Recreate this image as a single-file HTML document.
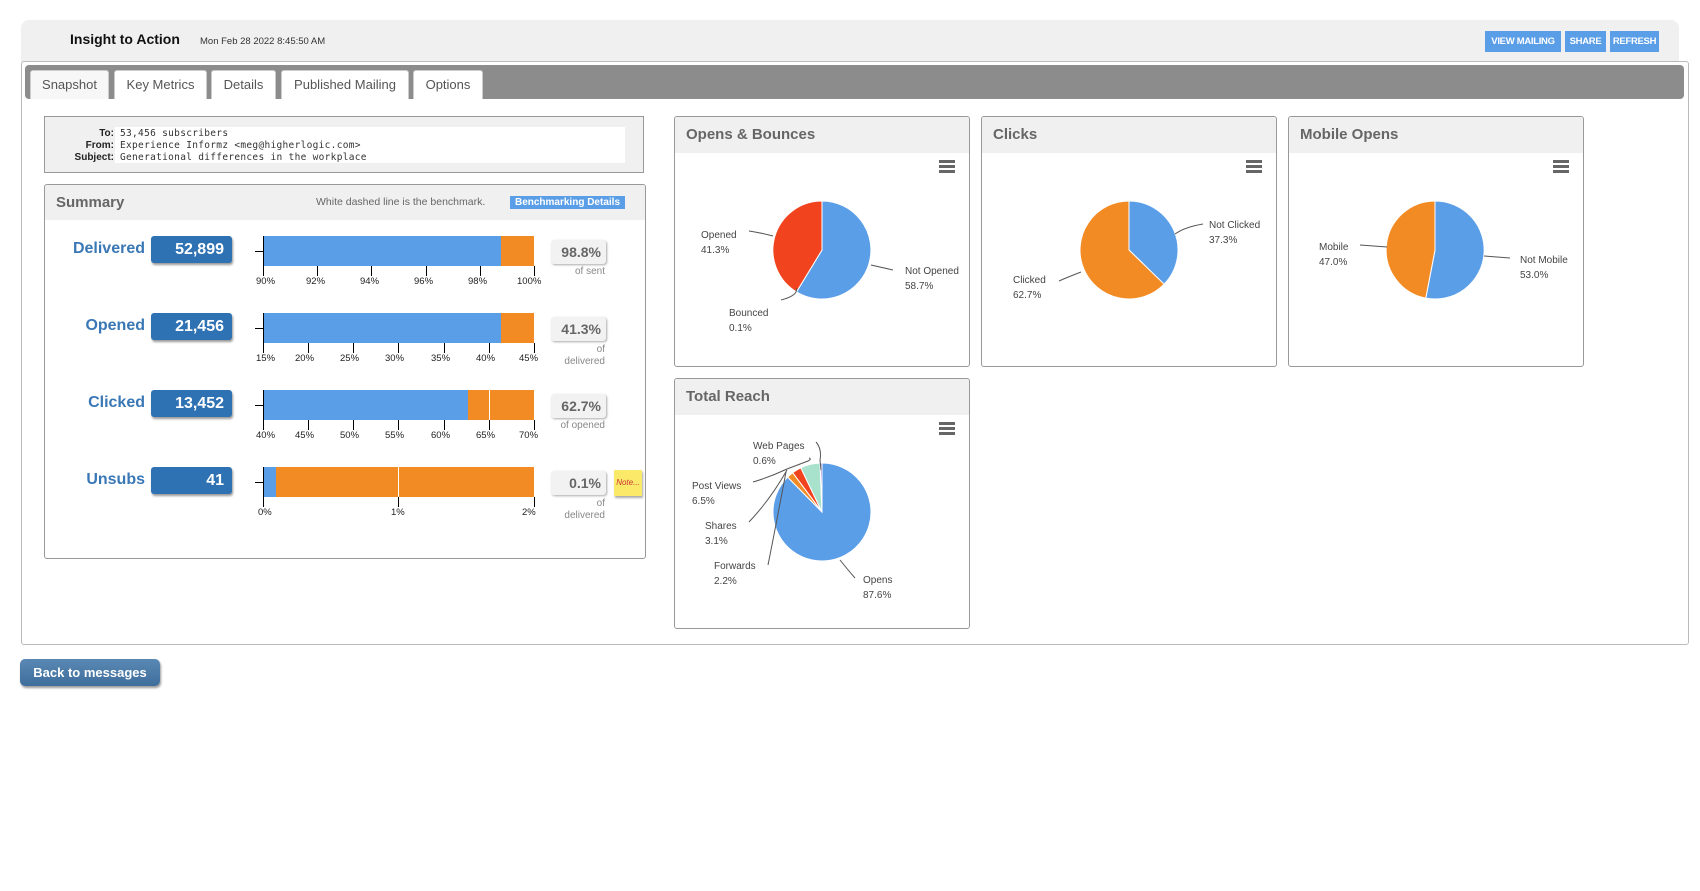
<!DOCTYPE html>
<html><head><meta charset="utf-8"><style>
*{box-sizing:border-box;margin:0;padding:0}
body{width:1700px;height:891px;background:#fff;font-family:"Liberation Sans",sans-serif;position:relative;overflow:hidden;color:#333}
.a{position:absolute}
.hdr{left:21px;top:20px;width:1658px;height:42px;background:#f0f0f0;border-radius:8px 8px 0 0}
.btn{top:31px;height:21px;background:#5b9ee8;color:#fff;font-size:9.5px;font-weight:bold;line-height:21px;text-align:center;letter-spacing:-0.3px}
.outer{left:21px;top:61px;width:1668px;height:584px;border:1px solid #bbb;border-radius:3px;background:#fff}
.strip{left:25px;top:65px;width:1659px;height:34px;background:#8c8c8c;border-radius:4px}
.tab{top:70px;height:29px;background:#fff;border:1px solid #ccc;border-bottom:none;border-radius:3px 3px 0 0;font-size:13px;color:#555;line-height:28px;text-align:center}
.box{border:1px solid #999;border-radius:3px;background:#fff}
.ph{background:#f0f0f0;border-radius:3px 3px 0 0;font-weight:bold;color:#666;font-size:15px;padding-left:11px;line-height:36px;height:36px}
.lbl{font-size:16px;font-weight:bold;color:#3a78b5;text-align:right;width:100px}
.badge{width:81px;height:27px;background:#2f72b3;border-radius:3px;color:#fff;font-weight:bold;font-size:16px;text-align:right;padding-right:8px;line-height:27px;box-shadow:1px 2px 2px #999}
.bar{height:30px;background:#5b9ee8}
.or{height:30px;background:#f28b24}
.tk{width:1px;height:10px;background:#000}
.tl{font-size:9.5px;color:#222;width:40px;margin-left:-10px}
.pct{width:55px;height:24px;background:#f2f2f2;border-radius:3px;box-shadow:1px 1px 2px #aaa;font-weight:bold;color:#666;font-size:14px;text-align:right;padding-right:5px;line-height:24px}
.sub{font-size:10px;color:#888;text-align:right;width:60px;line-height:12px}
.pl{font-size:10px;color:#444;line-height:15px}
.menu{width:16px;height:3px;background:#666;box-shadow:0 5px 0 #666,0 10px 0 #666}
</style></head><body>
<div class="a hdr"></div>
<div class="a" style="left:70px;top:31px;font-size:14px;font-weight:bold;color:#111">Insight to Action</div>
<div class="a" style="left:200px;top:36px;font-size:9.5px;color:#333">Mon Feb 28 2022 8:45:50 AM</div>
<div class="a btn" style="left:1485px;width:76px">VIEW MAILING</div>
<div class="a btn" style="left:1565px;width:41px">SHARE</div>
<div class="a btn" style="left:1610px;width:49px">REFRESH</div>
<div class="a outer"></div>
<div class="a strip"></div>
<div class="a tab" style="left:30px;width:79px;background:#f7f7f7">Snapshot</div>
<div class="a tab" style="left:114px;width:93px">Key Metrics</div>
<div class="a tab" style="left:211px;width:65px">Details</div>
<div class="a tab" style="left:281px;width:128px">Published Mailing</div>
<div class="a tab" style="left:413px;width:70px">Options</div>

<div class="a" style="left:44px;top:116px;width:600px;height:57px;border:1px solid #999;background:#f0f0f0"></div>
<div class="a" style="left:115px;top:127px;width:510px;height:36px;background:#fff"></div>
<div class="a" style="left:60px;top:128px;width:54px;text-align:right;font-size:10px;font-weight:bold;line-height:12px;color:#222">To:<br>From:<br>Subject:</div>
<div class="a" style="left:120px;top:128px;font-family:'DejaVu Sans Mono','Liberation Mono',monospace;font-size:9.5px;line-height:12px;color:#333;letter-spacing:0.3px">53,456 subscribers<br>Experience Informz &lt;meg@higherlogic.com&gt;<br>Generational differences in the workplace</div>

<div class="a box" style="left:44px;top:184px;width:602px;height:375px"><div class="ph" style="height:35px">Summary</div></div>
<div class="a" style="left:316px;top:196px;font-size:10.5px;color:#666">White dashed line is the benchmark.</div>
<div class="a" style="left:510px;top:196px;width:115px;height:13px;background:#5b9ee8;color:#fff;font-size:10px;font-weight:bold;line-height:13px;text-align:center">Benchmarking Details</div>

<!-- Delivered -->
<div class="a lbl" style="left:45px;top:240px">Delivered</div>
<div class="a badge" style="left:151px;top:236px">52,899</div>
<div class="a" style="left:255px;top:251px;width:8px;height:1px;background:#000"></div>
<div class="a bar" style="left:263px;top:236px;width:238px"></div>
<div class="a or" style="left:501px;top:236px;width:33px"></div>
<div class="a" style="left:263px;top:236px;width:1px;height:40px;background:#000"></div>
<div class="a tk" style="left:317px;top:266px"></div><div class="a tk" style="left:371px;top:266px"></div><div class="a tk" style="left:426px;top:266px"></div><div class="a tk" style="left:480px;top:266px"></div><div class="a tk" style="left:534px;top:266px"></div>
<div class="a tl" style="left:266px;top:276px">90%</div><div class="a tl" style="left:316px;top:276px">92%</div><div class="a tl" style="left:370px;top:276px">94%</div><div class="a tl" style="left:424px;top:276px">96%</div><div class="a tl" style="left:478px;top:276px">98%</div><div class="a tl" style="left:527px;top:276px">100%</div>
<div class="a pct" style="left:551px;top:240px">98.8%</div>
<div class="a sub" style="left:545px;top:266px">of sent</div>

<!-- Opened -->
<div class="a lbl" style="left:45px;top:317px">Opened</div>
<div class="a badge" style="left:151px;top:313px">21,456</div>
<div class="a" style="left:255px;top:328px;width:8px;height:1px;background:#000"></div>
<div class="a bar" style="left:263px;top:313px;width:238px"></div>
<div class="a or" style="left:501px;top:313px;width:33px"></div>
<div class="a" style="left:263px;top:313px;width:1px;height:40px;background:#000"></div>
<div class="a tk" style="left:308px;top:343px"></div><div class="a tk" style="left:353px;top:343px"></div><div class="a tk" style="left:398px;top:343px"></div><div class="a tk" style="left:444px;top:343px"></div><div class="a tk" style="left:489px;top:343px"></div><div class="a tk" style="left:534px;top:343px"></div>
<div class="a tl" style="left:266px;top:353px">15%</div><div class="a tl" style="left:305px;top:353px">20%</div><div class="a tl" style="left:350px;top:353px">25%</div><div class="a tl" style="left:395px;top:353px">30%</div><div class="a tl" style="left:441px;top:353px">35%</div><div class="a tl" style="left:486px;top:353px">40%</div><div class="a tl" style="left:529px;top:353px">45%</div>
<div class="a pct" style="left:551px;top:317px">41.3%</div>
<div class="a sub" style="left:545px;top:344px">of<br>delivered</div>

<!-- Clicked -->
<div class="a lbl" style="left:45px;top:394px">Clicked</div>
<div class="a badge" style="left:151px;top:390px">13,452</div>
<div class="a" style="left:255px;top:405px;width:8px;height:1px;background:#000"></div>
<div class="a bar" style="left:263px;top:390px;width:205px"></div>
<div class="a or" style="left:468px;top:390px;width:66px"></div>
<div class="a" style="left:489px;top:390px;width:1px;height:30px;background:#fff"></div>
<div class="a" style="left:263px;top:390px;width:1px;height:40px;background:#000"></div>
<div class="a tk" style="left:308px;top:420px"></div><div class="a tk" style="left:353px;top:420px"></div><div class="a tk" style="left:398px;top:420px"></div><div class="a tk" style="left:444px;top:420px"></div><div class="a tk" style="left:489px;top:420px"></div><div class="a tk" style="left:534px;top:420px"></div>
<div class="a tl" style="left:266px;top:430px">40%</div><div class="a tl" style="left:305px;top:430px">45%</div><div class="a tl" style="left:350px;top:430px">50%</div><div class="a tl" style="left:395px;top:430px">55%</div><div class="a tl" style="left:441px;top:430px">60%</div><div class="a tl" style="left:486px;top:430px">65%</div><div class="a tl" style="left:529px;top:430px">70%</div>
<div class="a pct" style="left:551px;top:394px">62.7%</div>
<div class="a sub" style="left:545px;top:420px">of opened</div>

<!-- Unsubs -->
<div class="a lbl" style="left:45px;top:471px">Unsubs</div>
<div class="a badge" style="left:151px;top:467px">41</div>
<div class="a" style="left:255px;top:482px;width:8px;height:1px;background:#000"></div>
<div class="a bar" style="left:264px;top:467px;width:12px"></div>
<div class="a or" style="left:276px;top:467px;width:258px"></div>
<div class="a" style="left:398px;top:467px;width:1px;height:30px;background:#fff"></div>
<div class="a" style="left:263px;top:467px;width:1px;height:40px;background:#000"></div>
<div class="a tk" style="left:398px;top:497px"></div><div class="a tk" style="left:534px;top:497px"></div>
<div class="a tl" style="left:268px;top:507px">0%</div><div class="a tl" style="left:401px;top:507px">1%</div><div class="a tl" style="left:532px;top:507px">2%</div>
<div class="a pct" style="left:551px;top:471px">0.1%</div>
<div class="a sub" style="left:545px;top:498px">of<br>delivered</div>
<div class="a" style="left:614px;top:470px;width:28px;height:26px;background:#fbe96a;box-shadow:1px 2px 2px #aaa;font-size:8px;color:#c33;font-style:italic;line-height:26px;text-align:center">Note...</div>

<!-- Pie panels -->
<div class="a box" style="left:674px;top:116px;width:296px;height:251px"><div class="ph">Opens &amp; Bounces</div></div>
<div class="a box" style="left:981px;top:116px;width:296px;height:251px"><div class="ph">Clicks</div></div>
<div class="a box" style="left:1288px;top:116px;width:296px;height:251px"><div class="ph">Mobile Opens</div></div>
<div class="a box" style="left:674px;top:378px;width:296px;height:251px"><div class="ph">Total Reach</div></div>
<div class="a menu" style="left:939px;top:160px"></div>
<div class="a menu" style="left:1246px;top:160px"></div>
<div class="a menu" style="left:1553px;top:160px"></div>
<div class="a menu" style="left:939px;top:422px"></div>

<svg class="a" style="left:0;top:0" width="1700" height="891">
<g stroke="#fff" stroke-width="1">
<g transform="translate(822,250)">
<path d="M0,0 L0,-49 A49,49 0 1 1 -25.5,41.9 Z" fill="#5b9ee8"/>
<path d="M0,0 L-25.5,41.9 A49,49 0 0 1 0,-49 Z" fill="#f2431f"/>
</g>
<g transform="translate(1129,250)">
<path d="M0,0 L0,-49 A49,49 0 0 1 35.1,34.2 Z" fill="#5b9ee8"/>
<path d="M0,0 L35.1,34.2 A49,49 0 1 1 0,-49 Z" fill="#f28b24"/>
</g>
<g transform="translate(1435,250)">
<path d="M0,0 L0,-49 A49,49 0 1 1 -9.2,48.1 Z" fill="#5b9ee8"/>
<path d="M0,0 L-9.2,48.1 A49,49 0 0 1 0,-49 Z" fill="#f28b24"/>
</g>
<g transform="translate(822,512)">
<path d="M0,0 L0,-49 A49,49 0 1 1 -34.4,-34.9 Z" fill="#5b9ee8"/>
<path d="M0,0 L-34.4,-34.9 A49,49 0 0 1 -29.3,-39.3 Z" fill="#f28b24"/>
<path d="M0,0 L-29.3,-39.3 A49,49 0 0 1 -21.2,-44.2 Z" fill="#f2431f"/>
<path d="M0,0 L-21.2,-44.2 A49,49 0 0 1 -1.9,-49 Z" fill="#a8e2cc"/>
<path d="M0,0 L-1.9,-49 A49,49 0 0 1 0,-49 Z" fill="#8a6fd0"/>
</g>
</g>
<g fill="none" stroke="#555" stroke-width="1">
<path d="M749,231 Q762,233 773,236"/>
<path d="M871,265 Q880,267 893,270"/>
<path d="M781,300 Q793,297 796,292 L797,288"/>
<path d="M1059,281 Q1068,277 1081,272"/>
<path d="M1175,234 Q1185,227 1203,224"/>
<path d="M1360,245 L1387,247"/>
<path d="M1484,256 L1510,258"/>
<path d="M753,482 Q770,477 787,469 L808,461 Q812,459 809,458"/>
<path d="M749,522 Q770,500 787,470"/>
<path d="M768,565 Q775,530 786,472"/>
<path d="M816,442 Q822,449 820,460 L821,470"/>
<path d="M840,560 Q848,570 855,578"/>
</g>
</svg>
<div class="a pl" style="left:701px;top:228px">Opened<br>41.3%</div>
<div class="a pl" style="left:905px;top:264px">Not Opened<br>58.7%</div>
<div class="a pl" style="left:729px;top:306px">Bounced<br>0.1%</div>
<div class="a pl" style="left:1209px;top:218px">Not Clicked<br>37.3%</div>
<div class="a pl" style="left:1013px;top:273px">Clicked<br>62.7%</div>
<div class="a pl" style="left:1319px;top:240px">Mobile<br>47.0%</div>
<div class="a pl" style="left:1520px;top:253px">Not Mobile<br>53.0%</div>
<div class="a pl" style="left:753px;top:439px">Web Pages<br>0.6%</div>
<div class="a pl" style="left:692px;top:479px">Post Views<br>6.5%</div>
<div class="a pl" style="left:705px;top:519px">Shares<br>3.1%</div>
<div class="a pl" style="left:714px;top:559px">Forwards<br>2.2%</div>
<div class="a pl" style="left:863px;top:573px">Opens<br>87.6%</div>

<div class="a" style="left:20px;top:659px;width:140px;height:27px;background:linear-gradient(#5a88b5,#3f6e9c);border-radius:5px;color:#fff;font-weight:bold;font-size:13px;line-height:27px;text-align:center;box-shadow:1px 2px 2px #999">Back to messages</div>
</body></html>
